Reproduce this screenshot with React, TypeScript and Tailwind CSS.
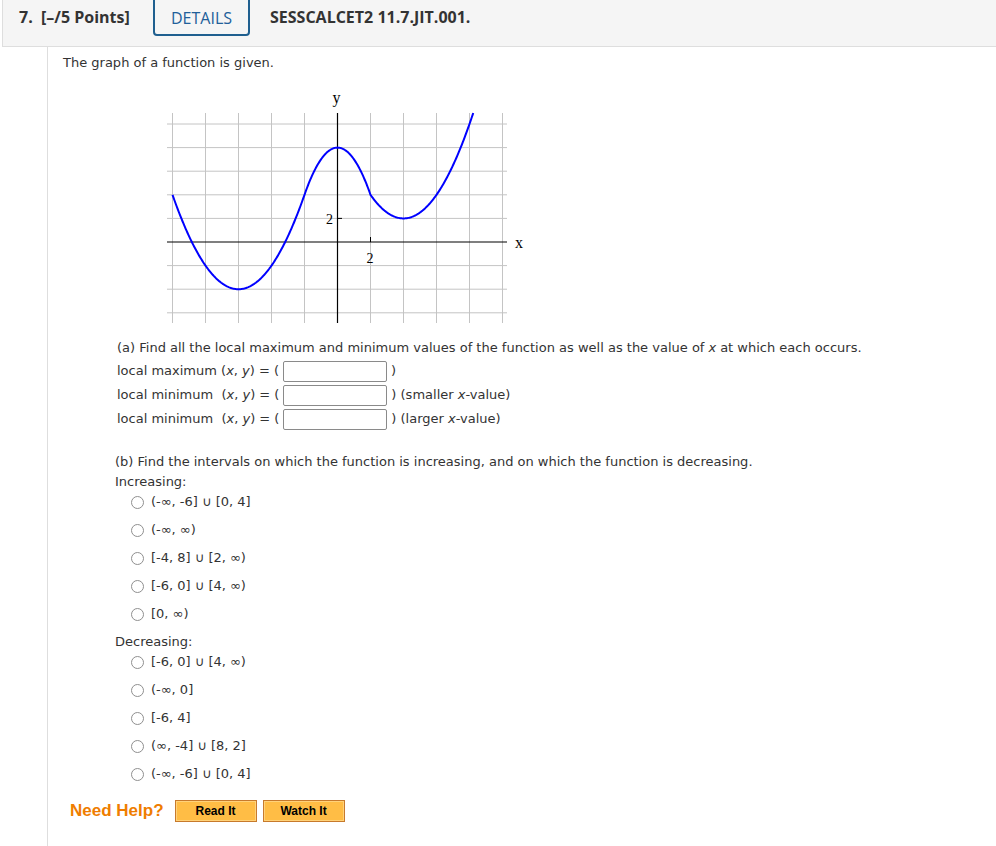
import React from "react";

const X = (x: number) => 337.5 + 16.5 * x;
const Y = (y: number) => 242 - 11.8 * y;

function f(x: number): number {
  if (x <= -2) return -4 + 0.5 * (x + 6) * (x + 6);
  if (x <= 0) {
    const t = (x + 2) / 2;
    const h00 = 2 * t ** 3 - 3 * t ** 2 + 1;
    const h10 = t ** 3 - 2 * t ** 2 + t;
    const h01 = -2 * t ** 3 + 3 * t ** 2;
    return h00 * 4 + h10 * 8 + h01 * 8;
  }
  if (x <= 2) return 8 - x * x;
  return 2 + 0.5 * (x - 4) * (x - 4);
}

function curvePath(): string {
  const pts: string[] = [];
  const end = 4 + Math.sqrt(2 * (10.93 - 2));
  const xs: number[] = [];
  for (let x = -10; x < end; x += 0.05) xs.push(x);
  xs.push(2);
  xs.sort((a, b) => a - b);
  xs.push(end);
  xs.forEach((x, i) => {
    pts.push(`${i === 0 ? "M" : "L"}${X(x).toFixed(2)},${Y(f(x)).toFixed(2)}`);
  });
  return pts.join(" ");
}

function Graph() {
  const vlines = [-10, -8, -6, -4, -2, 2, 4, 6, 8, 10];
  const hlines = [10, 8, 6, 4, 2, -2, -4, -6];
  return (
    <svg width={380} height={245} viewBox="150 85 380 245" className="block">
      {vlines.map((v) => (
        <line key={"v" + v} x1={X(v)} x2={X(v)} y1={113} y2={323} stroke="#c4c4c4" strokeWidth={1} />
      ))}
      {hlines.map((h) => (
        <line key={"h" + h} x1={167} x2={507} y1={Y(h)} y2={Y(h)} stroke="#c4c4c4" strokeWidth={1} />
      ))}
      <line x1={167} x2={507} y1={242} y2={242} stroke="#000" strokeWidth={1.2} />
      <line x1={337.5} x2={337.5} y1={113} y2={323} stroke="#000" strokeWidth={1.2} />
      <line x1={X(2)} x2={X(2)} y1={237} y2={242} stroke="#000" strokeWidth={1} />
      <line x1={337.5} x2={342} y1={Y(2)} y2={Y(2)} stroke="#000" strokeWidth={1} />
      <path d={curvePath()} fill="none" stroke="#0000ff" strokeWidth={2} strokeLinejoin="round" />
      <text x={336.5} y={103} textAnchor="middle" fontFamily="'Liberation Serif', serif" fontSize={16}>y</text>
      <text x={519} y={248} textAnchor="middle" fontFamily="'Liberation Serif', serif" fontSize={16}>x</text>
      <text x={333} y={224} textAnchor="end" fontFamily="'Liberation Serif', serif" fontSize={14}>2</text>
      <text x={370} y={263} textAnchor="middle" fontFamily="'Liberation Serif', serif" fontSize={14}>2</text>
    </svg>
  );
}

function Radio({ label }: { label: string }) {
  return (
    <div className="flex items-center h-[20px]">
      <span className="w-[13px] h-[13px] rounded-full border border-[#8f8f8f] bg-white mr-[7px]" />
      <span>{label}</span>
    </div>
  );
}

function InputRow({ label, suffix }: { label: React.ReactNode; suffix: React.ReactNode }) {
  return (
    <div className="flex items-center h-[24px]">
      <span>{label}</span>
      <span className="ml-[4px]">(</span>
      <span className="ml-[4px] w-[104px] h-[21px] border border-[#8a8a8a] rounded-[2px] bg-white" />
      <span className="ml-[4px] whitespace-pre">){suffix}</span>
    </div>
  );
}

const xy = (
  <>
    (<i>x</i>, <i>y</i>) =
  </>
);

export default function App() {
  const inc = ["(-∞, -6] ∪ [0, 4]", "(-∞, ∞)", "[-4, 8] ∪ [2, ∞)", "[-6, 0] ∪ [4, ∞)", "[0, ∞)"];
  const dec = ["[-6, 0] ∪ [4, ∞)", "(-∞, 0]", "[-6, 4]", "(∞, -4] ∪ [8, 2]", "(-∞, -6] ∪ [0, 4]"];
  return (
    <div className="w-[996px] h-[846px] bg-white overflow-hidden relative" style={{ fontFamily: "'DejaVu Sans', Verdana, sans-serif" }}>
      <div className="ml-[2px] h-[47px] bg-[#f5f5f5] border-l border-b border-[#dedede] flex items-start text-[#333]" style={{ fontFamily: "'Open Sans', sans-serif" }}>
        <div className="pl-[16px] pt-[5px] text-[16px] font-bold w-[150px] leading-[24px]">7.&nbsp; [–/5 Points]</div>
        <div className="-mt-[2px] h-[38px] w-[97px] border-2 border-[#1f5f8f] rounded-b-[4px] flex items-center justify-center pt-[2px] text-[16px] text-[#21609a] font-medium bg-[#f5f5f5]">DETAILS</div>
        <div className="pl-[20px] pt-[5px] text-[16px] font-bold leading-[24px]">SESSCALCET2 11.7.JIT.001.</div>
      </div>
      <div className="ml-[47px] h-[800px] border-l border-[#dedede] text-[13px] text-[#333] leading-[20px]">
        <div className="pl-[15px] pt-[6px]">The graph of a function is given.</div>
        <div className="ml-[102px] mt-[12px]">
          <Graph />
        </div>
        <div className="ml-[69px] mt-[7px]">
          <div className="h-[22px] flex items-center">(a) Find all the local maximum and minimum values of the function as well as the value of <i className="mx-[4px]">x</i> at which each occurs.</div>
          <InputRow label={<>local maximum {xy}</>} suffix="" />
          <InputRow label={<>local minimum&nbsp; {xy}</>} suffix={<> (smaller <i>x</i>-value)</>} />
          <InputRow label={<>local minimum&nbsp; {xy}</>} suffix={<> (larger <i>x</i>-value)</>} />
        </div>
        <div className="ml-[67px] mt-[21px]">
          <div className="h-[20px] flex items-center">(b) Find the intervals on which the function is increasing, and on which the function is decreasing.</div>
          <div className="h-[20px] flex items-center">Increasing:</div>
          <div className="ml-[16px] flex flex-col gap-[8px]">
            {inc.map((s) => (
              <Radio key={s} label={s} />
            ))}
          </div>
          <div className="h-[20px] flex items-center mt-[8px]">Decreasing:</div>
          <div className="ml-[16px] flex flex-col gap-[8px]">
            {dec.map((s) => (
              <Radio key={s} label={s} />
            ))}
          </div>
        </div>
        <div className="ml-[22px] mt-[16px] flex items-center" style={{ fontFamily: "'Liberation Sans', Arial, sans-serif" }}>
          <span className="text-[17px] font-bold text-[#ef7d00]">Need Help?</span>
          <button className="ml-[11px] w-[82px] h-[22px] bg-[#ffbd45] border border-[#c77a2c] text-[12px] font-bold text-black shadow-[inset_0_0_0_1px_#ffd27a]">Read It</button>
          <button className="ml-[6px] w-[82px] h-[22px] bg-[#ffbd45] border border-[#c77a2c] text-[12px] font-bold text-black shadow-[inset_0_0_0_1px_#ffd27a]">Watch It</button>
        </div>
      </div>
    </div>
  );
}
